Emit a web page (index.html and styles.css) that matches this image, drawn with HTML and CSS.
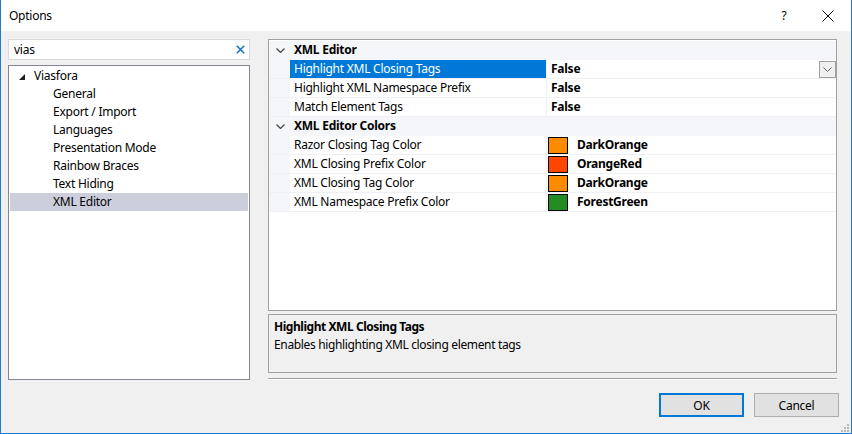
FILE: index.html
```html
<!DOCTYPE html>
<html>
<head>
<meta charset="utf-8">
<title>Options</title>
<link rel="stylesheet" href="styles.css">
</head>
<body>
<div class="window">
  <div class="titlebar">
    <span class="title">Options</span>
    <span class="tb-help">?</span>
    <span class="tb-close"><svg width="12" height="12" viewBox="0 0 12 12"><path d="M0.5 0.5L11.5 11.5M11.5 0.5L0.5 11.5" stroke="#000" stroke-width="1" fill="none"/></svg></span>
  </div>
  <div class="main">
    <div class="left">
      <div class="search">
        <span class="search-text">vias</span>
        <svg class="search-clear" width="9" height="9" viewBox="0 0 9 9"><path d="M0.8 0.8L8.2 8.2M8.2 0.8L0.8 8.2" stroke="#1a73c9" stroke-width="1.6" fill="none"/></svg>
      </div>
      <div class="tree">
        <div class="tree-row root">
          <svg class="tree-arrow" width="6" height="6" viewBox="0 0 6 6"><polygon points="6,0 6,6 0,6" fill="#1e1e1e"/></svg>
          <span>Viasfora</span>
        </div>
        <div class="tree-row child">General</div>
        <div class="tree-row child">Export / Import</div>
        <div class="tree-row child">Languages</div>
        <div class="tree-row child">Presentation Mode</div>
        <div class="tree-row child">Rainbow Braces</div>
        <div class="tree-row child">Text Hiding</div>
        <div class="tree-row child selected">XML Editor</div>
      </div>
    </div>
    <div class="right">
      <div class="grid">
        <div class="cat-row">
          <span class="cat-gutter"><svg width="9" height="5" viewBox="0 0 9 5"><path d="M0.5 0.5L4.5 4.5L8.5 0.5" stroke="#444" stroke-width="1.2" fill="none"/></svg></span>
          <span class="cat-label">XML Editor</span>
        </div>
        <div class="prop-row">
          <span class="gutter"></span>
          <span class="label selected">Highlight XML Closing Tags</span>
          <span class="value"><span class="val-text">False</span><span class="dropdown"><svg width="9" height="5" viewBox="0 0 9 5"><path d="M0.5 0.5L4.5 4.5L8.5 0.5" stroke="#606060" stroke-width="1" fill="none"/></svg></span></span>
        </div>
        <div class="prop-row">
          <span class="gutter"></span>
          <span class="label">Highlight XML Namespace Prefix</span>
          <span class="value"><span class="val-text">False</span></span>
        </div>
        <div class="prop-row">
          <span class="gutter"></span>
          <span class="label">Match Element Tags</span>
          <span class="value"><span class="val-text">False</span></span>
        </div>
        <div class="cat-row">
          <span class="cat-gutter"><svg width="9" height="5" viewBox="0 0 9 5"><path d="M0.5 0.5L4.5 4.5L8.5 0.5" stroke="#444" stroke-width="1.2" fill="none"/></svg></span>
          <span class="cat-label">XML Editor Colors</span>
        </div>
        <div class="prop-row">
          <span class="gutter"></span>
          <span class="label">Razor Closing Tag Color</span>
          <span class="value"><span class="swatch" style="background:#ff8c00"></span><span class="color-text">DarkOrange</span></span>
        </div>
        <div class="prop-row">
          <span class="gutter"></span>
          <span class="label">XML Closing Prefix Color</span>
          <span class="value"><span class="swatch" style="background:#ff4500"></span><span class="color-text">OrangeRed</span></span>
        </div>
        <div class="prop-row">
          <span class="gutter"></span>
          <span class="label">XML Closing Tag Color</span>
          <span class="value"><span class="swatch" style="background:#ff8c00"></span><span class="color-text">DarkOrange</span></span>
        </div>
        <div class="prop-row">
          <span class="gutter"></span>
          <span class="label">XML Namespace Prefix Color</span>
          <span class="value"><span class="swatch" style="background:#228b22"></span><span class="color-text">ForestGreen</span></span>
        </div>
      </div>
      <div class="desc">
        <div class="desc-title">Highlight XML Closing Tags</div>
        <div class="desc-text">Enables highlighting XML closing element tags</div>
      </div>
      <div class="separator"></div>
    </div>
  </div>
  <div class="footer">
    <button class="btn btn-default">OK</button>
    <button class="btn">Cancel</button>
  </div>
  <svg class="grip" width="9" height="9" viewBox="0 0 9 9">
    <rect x="7" y="1" width="2" height="2" fill="#b8b8b8"/>
    <rect x="4" y="4" width="2" height="2" fill="#b8b8b8"/>
    <rect x="7" y="4" width="2" height="2" fill="#b8b8b8"/>
    <rect x="1" y="7" width="2" height="2" fill="#b8b8b8"/>
    <rect x="4" y="7" width="2" height="2" fill="#b8b8b8"/>
    <rect x="7" y="7" width="2" height="2" fill="#b8b8b8"/>
  </svg>
</div>
</body>
</html>
```
FILE: styles.css
```css
* { box-sizing: border-box; }
html, body { margin: 0; padding: 0; }
body {
  font-family: "Noto Sans", "Open Sans", sans-serif;
  font-size: 12px;
  letter-spacing: -0.25px;
  color: #000;
  background: #f0f0f0;
}
.window {
  position: relative;
  width: 852px;
  height: 434px;
  background: #f0f0f0;
  border-left: 1px solid #1a7bd0;
  border-right: 1px solid #1a7bd0;
  border-bottom: 1px solid #1a7bd0;
  display: flex;
  flex-direction: column;
  overflow: hidden;
}
.titlebar {
  height: 31px;
  background: #fff;
  display: flex;
  align-items: center;
  flex-shrink: 0;
}
.title {
  margin-left: 8px;
  font-size: 12px;
  flex: 1;
}
.tb-help {
  width: 46px;
  text-align: center;
  font-size: 12px;
  margin-right: 0;
  padding-left: 4px;
}
.tb-close {
  width: 46px;
  height: 31px;
  display: flex;
  align-items: center;
  justify-content: center;
  padding-right: 1px;
}
.main {
  display: flex;
  padding: 8px 14px 0 7px;
  height: 349px;
  flex-shrink: 0;
}
.left {
  width: 242px;
  display: flex;
  flex-direction: column;
  gap: 5px;
}
.search {
  height: 21px;
  background: #fff;
  border: 1px solid #d9d9d9;
  display: flex;
  align-items: center;
  padding: 0 4px 0 5px;
}
.search-text { flex: 1; line-height: 19px; }
.tree {
  height: 315px;
  background: #fff;
  border: 1px solid #828790;
  padding: 1px 0 0 1px;
}
.tree-row {
  height: 18px;
  line-height: 18px;
  display: flex;
  align-items: center;
  white-space: nowrap;
}
.tree-row.root { padding-left: 9px; }
.tree-arrow { margin-right: 9px; margin-top: 1px; }
.tree-row.child { padding-left: 43px; }
.tree-row.selected {
  background: #cccedb;
  margin-right: 1px;
}
.right {
  width: 569px;
  margin-left: 18px;
  display: flex;
  flex-direction: column;
}
.grid {
  height: 272px;
  background: #fff;
  border: 1px solid #a0a0a0;
  padding-top: 1px;
  flex-shrink: 0;
}
.cat-row {
  height: 19px;
  border-bottom: 1px solid #f4f6fa;
  background: #f4f6fa;
  display: flex;
  align-items: center;
  font-weight: bold;
}
.cat-gutter {
  width: 21px;
  display: flex;
  justify-content: center;
  padding-left: 2px;
}
.cat-label { padding-left: 4px; line-height: 18px; }
.prop-row {
  height: 19px;
  display: flex;
  border-bottom: 1px solid #eef0f4;
}
.gutter {
  width: 21px;
  background: #f4f6fa;
  flex-shrink: 0;
}
.label {
  width: 257px;
  padding-left: 4px;
  line-height: 18px;
  white-space: nowrap;
  overflow: hidden;
  border-right: 1px solid #eef0f4;
  flex-shrink: 0;
}
.label.selected {
  background: #0078d7;
  color: #fff;
}
.value {
  flex: 1;
  display: flex;
  align-items: center;
  font-weight: bold;
}
.val-text { padding-left: 4px; flex: 1; line-height: 18px; }
.dropdown {
  width: 17px;
  height: 17px;
  border: 1px solid #a0a0a0;
  background: #f0f0f0;
  display: flex;
  align-items: center;
  justify-content: center;
  margin-top: 1px;
}
.swatch {
  width: 20px;
  height: 17px;
  border: 1px solid #000;
  margin-left: 1px;
  margin-top: 1px;
}
.color-text { padding-left: 9px; line-height: 18px; }
.desc {
  margin-top: 3px;
  height: 59px;
  border: 1px solid #a0a0a0;
  background: #f0f0f0;
  padding: 4px 0 0 5px;
  flex-shrink: 0;
}
.desc-title { font-weight: bold; line-height: 16px; letter-spacing: -0.45px; }
.desc-text { line-height: 16px; margin-top: 2px; letter-spacing: -0.35px; }
.separator {
  margin-top: 5px;
  height: 2px;
  border-top: 1px solid #a0a0a0;
  border-bottom: 1px solid #fff;
  flex-shrink: 0;
}
.footer {
  display: flex;
  justify-content: flex-end;
  gap: 10px;
  padding: 13px 12px 0 0;
}
.btn {
  width: 85px;
  height: 24px;
  background: #e1e1e1;
  border: 1px solid #adadad;
  font-family: "Noto Sans", "Open Sans", sans-serif;
  font-size: 12px;
  letter-spacing: -0.25px;
  color: #000;
  padding: 0;
  margin: 0;
}
.btn-default {
  border: 2px solid #0078d7;
}
.grip {
  position: absolute;
  right: 2px;
  bottom: 1px;
}
```
